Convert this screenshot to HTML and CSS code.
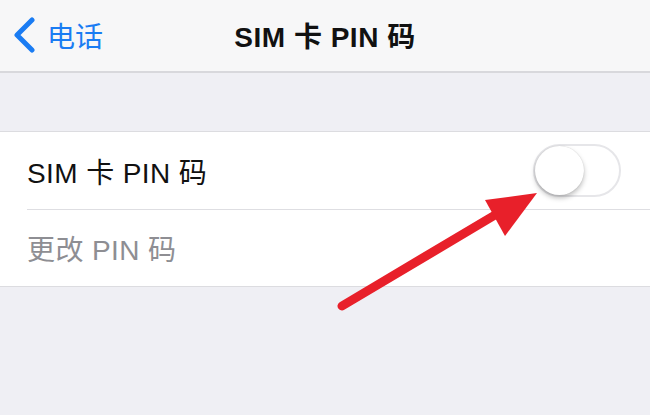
FILE: index.html
```html
<!DOCTYPE html>
<html lang="zh-CN">

<head>
  <meta charset="UTF-8">
  <meta name="viewport" content="width=device-width, initial-scale=1.0">
  <title>SIM 卡 PIN 码</title>
  <link rel="stylesheet" href="styles.css">
</head>

<body>
  <div class="nav">
    <a class="nav-back">
      <svg class="nav-back-icon" width="22" height="36" viewBox="0 0 22 36">
        <path d="M19 3 L4 18 L19 33" fill="none" stroke="#1a7cf3" stroke-width="5" stroke-linecap="round" stroke-linejoin="round"/>
      </svg>
      <span>电话</span>
    </a>
    <div class="nav-title">SIM 卡 PIN 码</div>
    <div></div>
  </div>

  <div class="group">
    <div class="cell">
      <span>SIM 卡 PIN 码</span>
      <div class="switch"><div class="switch-knob"></div></div>
    </div>
    <div class="cell cell-disabled">
      <span>更改 PIN 码</span>
    </div>
  </div>

  <!-- 红色指示箭头 -->
  <svg class="pointer" width="650" height="415" viewBox="0 0 650 415">
    <line x1="342" y1="306" x2="500" y2="212" stroke="#e8202a" stroke-width="9" stroke-linecap="round"/>
    <polygon points="537,193 485,200 505,236" fill="#e8202a"/>
  </svg>
</body>

</html>
```

FILE: styles.css
```css
*,
*::before,
*::after {
  margin: 0;
  padding: 0;
  box-sizing: border-box;
}
body {
  position: relative;
  height: 415px;
  overflow: hidden;
  background: #efeff4;
  font-family: "Liberation Sans", "Noto Sans CJK SC", sans-serif;
  color: #111;
}
.nav {
  display: grid;
  grid-template-columns: 1fr auto 1fr;
  align-items: center;
  height: 73px;
  padding-bottom: 2px;
  background: #f7f7f8;
  border-bottom: 2px solid #d8d8dc;
}
.nav-back {
  display: flex;
  align-items: center;
  padding-left: 13px;
  color: #1a7cf3;
  font-size: 28px;
}
.nav-back-icon {
  margin-right: 12px;
}
.nav-title {
  font-size: 28px;
  font-weight: bold;
  letter-spacing: 0.5px;
}
.group {
  margin-top: 58px;
  background: #fff;
  border-top: 1px solid #dcdce0;
  border-bottom: 1px solid #dcdce0;
}
.cell {
  display: flex;
  align-items: center;
  justify-content: space-between;
  height: 77px;
  margin-left: 27px;
  padding-right: 29px;
  font-size: 28px;
  letter-spacing: 0.4px;
}
.cell + .cell {
  border-top: 1px solid #dedee2;
}
.cell-disabled {
  color: #8e8e93;
}
.switch {
  width: 88px;
  height: 53px;
  border: 2px solid #e6e6e9;
  border-radius: 27px;
  background: #fff;
}
.switch-knob {
  width: 49px;
  height: 49px;
  border-radius: 50%;
  background: #fff;
  box-shadow: 0 3px 5px rgba(0, 0, 0, 0.25), 0 0 1px rgba(0, 0, 0, 0.2);
}
.pointer {
  position: absolute;
  top: 0;
  left: 0;
}
```
